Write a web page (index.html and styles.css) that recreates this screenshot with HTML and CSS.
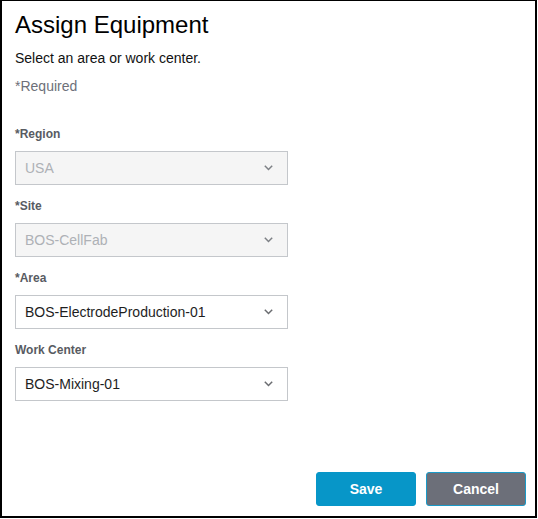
FILE: index.html
```html
<!DOCTYPE html>
<html>
	<head>
		<meta charset="UTF-8">
		<title>Assign Equipment</title>
		<link rel="stylesheet" href="styles.css">
	</head>
	<body>
		<div class="dialog">
			<h1 class="title">Assign Equipment</h1>
			<p class="intro">Select an area or work center.</p>
			<p class="required">*Required</p>

			<div class="field">
				<label>*Region</label>
				<div class="select disabled"><span>USA</span>
					<svg width="9" height="6" viewBox="0 0 9 6"><polyline points="0.8,0.8 4.5,4.5 8.2,0.8" /></svg>
				</div>
			</div>
			<div class="field">
				<label>*Site</label>
				<div class="select disabled"><span>BOS-CellFab</span>
					<svg width="9" height="6" viewBox="0 0 9 6"><polyline points="0.8,0.8 4.5,4.5 8.2,0.8" /></svg>
				</div>
			</div>
			<div class="field">
				<label>*Area</label>
				<div class="select"><span>BOS-ElectrodeProduction-01</span>
					<svg width="9" height="6" viewBox="0 0 9 6"><polyline points="0.8,0.8 4.5,4.5 8.2,0.8" /></svg>
				</div>
			</div>
			<div class="field">
				<label>Work Center</label>
				<div class="select"><span>BOS-Mixing-01</span>
					<svg width="9" height="6" viewBox="0 0 9 6"><polyline points="0.8,0.8 4.5,4.5 8.2,0.8" /></svg>
				</div>
			</div>

			<div class="actions">
				<button class="btn save">Save</button>
				<button class="btn cancel">Cancel</button>
			</div>
		</div>
	</body>
</html>
```

FILE: styles.css
```css
body{
	margin: 0;
	font-family: "Liberation Sans", Arial, sans-serif;
	background: #fff;
}
.dialog{
	box-sizing: border-box;
	width: 537px;
	height: 518px;
	border: 2px solid #000;
	border-top-width: 1px;
	padding: 0 0 0 13px;
	display: flex;
	flex-direction: column;
}
.title{
	margin: 10px 0 0;
	font-size: 24px;
	line-height: 28px;
	font-weight: normal;
	color: #000;
}
.intro{
	margin: 9px 0 0;
	font-size: 14px;
	line-height: 20px;
	color: #111;
}
.required{
	margin: 8px 0 0;
	font-size: 14px;
	line-height: 20px;
	color: #6d7079;
}
.field{
	margin-top: 13px;
	width: 273px;
}
.required + .field{
	margin-top: 30px;
}
.field label{
	display: block;
	font-size: 12px;
	line-height: 16px;
	font-weight: bold;
	color: #585b62;
	margin-bottom: 9px;
}
.select{
	box-sizing: border-box;
	height: 34px;
	border: 1px solid #c4c7cb;
	background: #fff;
	padding: 0 14px 0 9px;
	display: flex;
	align-items: center;
	justify-content: space-between;
	font-size: 14px;
	color: #1e1e1e;
}
.select svg{
	fill: none;
	stroke: #6a6c70;
	stroke-width: 1.5;
}
.select.disabled{
	background: #f5f5f5;
	color: #aeb1b6;
}
.select.disabled svg{
	stroke: #7d8085;
}
.actions{
	margin-top: auto;
	display: flex;
	justify-content: flex-end;
	gap: 10px;
	padding: 0 9px 10px 0;
}
.btn{
	box-sizing: border-box;
	width: 100px;
	height: 34px;
	border-radius: 3px;
	font-family: "Liberation Sans", Arial, sans-serif;
	font-size: 14px;
	font-weight: bold;
	color: #fff;
	cursor: pointer;
}
.save{
	background: #0796c8;
	border: 1px solid #0796c8;
}
.cancel{
	background: #6c6f79;
	border: 1px solid #1a9ac8;
}
```
